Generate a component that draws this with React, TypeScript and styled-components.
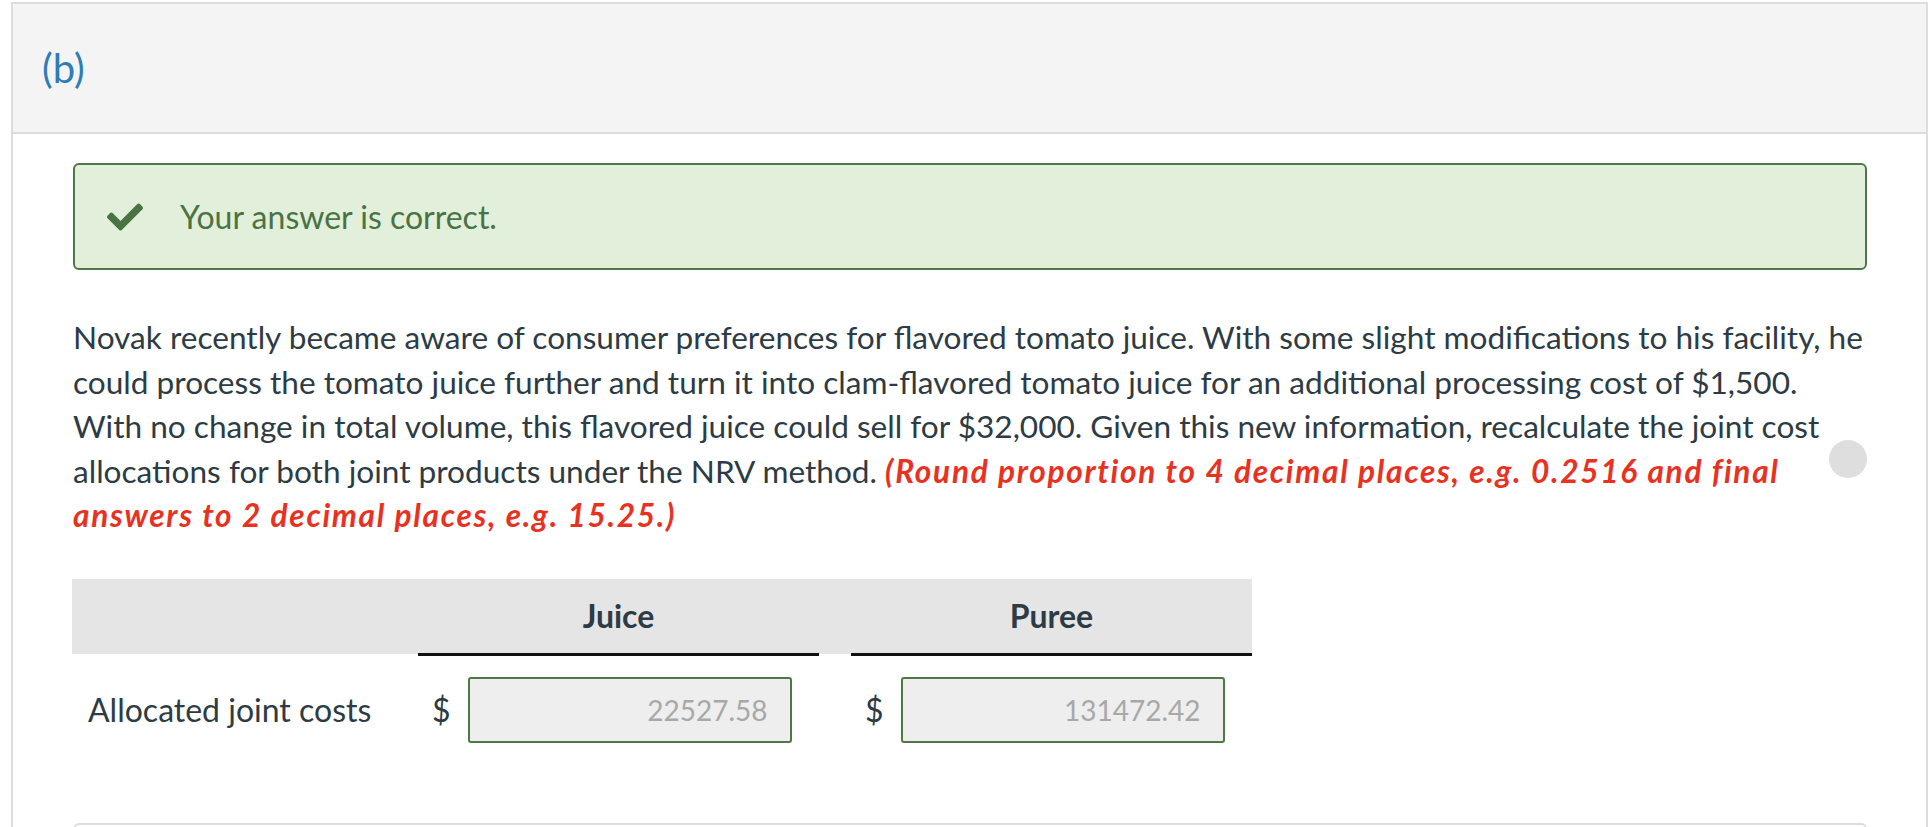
import * as React from 'react'
import styled, { createGlobalStyle } from 'styled-components'
import { FaCheck } from 'react-icons/fa'

const GlobalStyle = createGlobalStyle`
  html, body {
    margin: 0;
    padding: 0;
    background: #fff;
    font-family: Lato, "Open Sans", Arial, sans-serif;
    color: #2d3b45;
  }
`

const rows = [
  { label: 'Allocated joint costs', values: ['22527.58', '131472.42'] },
]

export default function App() {
  return (
    <Page>
      <GlobalStyle />
      <Panel>
        <PartHeader>(b)</PartHeader>
        <PartBody>
          <Feedback>
            <FaCheck size={36} />
            <span>Your answer is correct.</span>
          </Feedback>

          <Question>
            Novak recently became aware of consumer preferences for flavored tomato juice. With some slight
            modifications to his facility, he could process the tomato juice further and turn it into
            clam-flavored tomato juice for an additional processing cost of $1,500. With no change in total
            volume, this flavored juice could sell for $32,000. Given this new information, recalculate the
            joint cost allocations for both joint products under the NRV method.{' '}
            <Hint>
              (Round proportion to 4 decimal places, e.g. 0.2516 and final answers to 2 decimal places, e.g.
              15.25.)
            </Hint>
            <StatusDot />
          </Question>

          <Table>
            <HeadRow>
              <HeadCell />
              <HeadCell underline>Juice</HeadCell>
              <HeadCell underline>Puree</HeadCell>
            </HeadRow>
            {rows.map(r => (
              <BodyRow key={r.label}>
                <Label>{r.label}</Label>
                {r.values.map(v => (
                  <Amount key={v}>
                    <Dollar>$</Dollar>
                    <AnswerInput type="text" value={v} readOnly />
                  </Amount>
                ))}
              </BodyRow>
            ))}
          </Table>

          <NextBox />
        </PartBody>
      </Panel>
    </Page>
  )
}

const Page = styled.div`
  padding: 2px 2px 0 11px;
  height: 825px;
  overflow: hidden;
`

const Panel = styled.div`
  border: 2px solid #dddddd;
  border-bottom: 0;
  min-height: 900px;
`

const PartHeader = styled.div`
  height: 128px;
  display: flex;
  align-items: center;
  padding-left: 29px;
  background: #f4f4f4;
  border-bottom: 2px solid #dddddd;
  color: #2f7db5;
  font-size: 40px;
`

const PartBody = styled.div`
  padding: 29px 59px 0 60px;
`

const Feedback = styled.div`
  height: 103px;
  display: flex;
  align-items: center;
  gap: 37px;
  padding-left: 32px;
  background: #e2efda;
  border: 2px solid #4e7846;
  border-radius: 6px;
  color: #4a7344;
  font-size: 32px;

  svg {
    flex-shrink: 0;
    color: #4a7344;
  }
`

const Question = styled.p`
  position: relative;
  margin: 45px 0 0;
  font-size: 31.6px;
  line-height: 44.5px;
  color: #2d3b45;
`

const Hint = styled.strong`
  font-style: italic;
  font-weight: 700;
  letter-spacing: 1.7px;
  color: #e8321f;
`

const StatusDot = styled.span`
  position: absolute;
  right: 0;
  top: 125px;
  width: 38px;
  height: 38px;
  border-radius: 50%;
  background: #dedede;
`

const Table = styled.div`
  margin: 41px 0 0 -1px;
`

const HeadRow = styled.div`
  display: grid;
  grid-template-columns: 314px 401px 401px;
  column-gap: 32px;
  width: max-content;
  background: #e5e5e5;
`

const HeadCell = styled.div<{ underline?: boolean }>`
  height: 77px;
  display: flex;
  align-items: center;
  justify-content: center;
  font-size: 32px;
  font-weight: 700;
  color: #2d3b45;
  border-bottom: 3px solid ${p => (p.underline ? '#111' : 'transparent')};
  box-sizing: border-box;
  margin-bottom: -2px;
`

const BodyRow = styled.div`
  display: grid;
  grid-template-columns: 314px 401px 401px;
  column-gap: 32px;
  align-items: center;
  margin-top: 23px;
`

const Label = styled.div`
  padding-left: 16px;
  font-size: 32px;
  color: #2d3b45;
`

const Amount = styled.div`
  display: flex;
  align-items: center;
  gap: 17px;
  padding-left: 14px;
`

const Dollar = styled.span`
  font-size: 32px;
  color: #2d3b45;
`

const AnswerInput = styled.input`
  box-sizing: border-box;
  width: 324px;
  height: 66px;
  padding: 0 22px 0 10px;
  border: 2px solid #4e7846;
  border-radius: 3px;
  background: #eeeeee;
  color: #a8a8a8;
  font-family: Lato, "Open Sans", Arial, sans-serif;
  font-size: 28px;
  text-align: right;
  outline: none;
`

const NextBox = styled.div`
  margin-top: 80px;
  height: 100px;
  border: 2px solid #dddddd;
  border-radius: 6px;
`
